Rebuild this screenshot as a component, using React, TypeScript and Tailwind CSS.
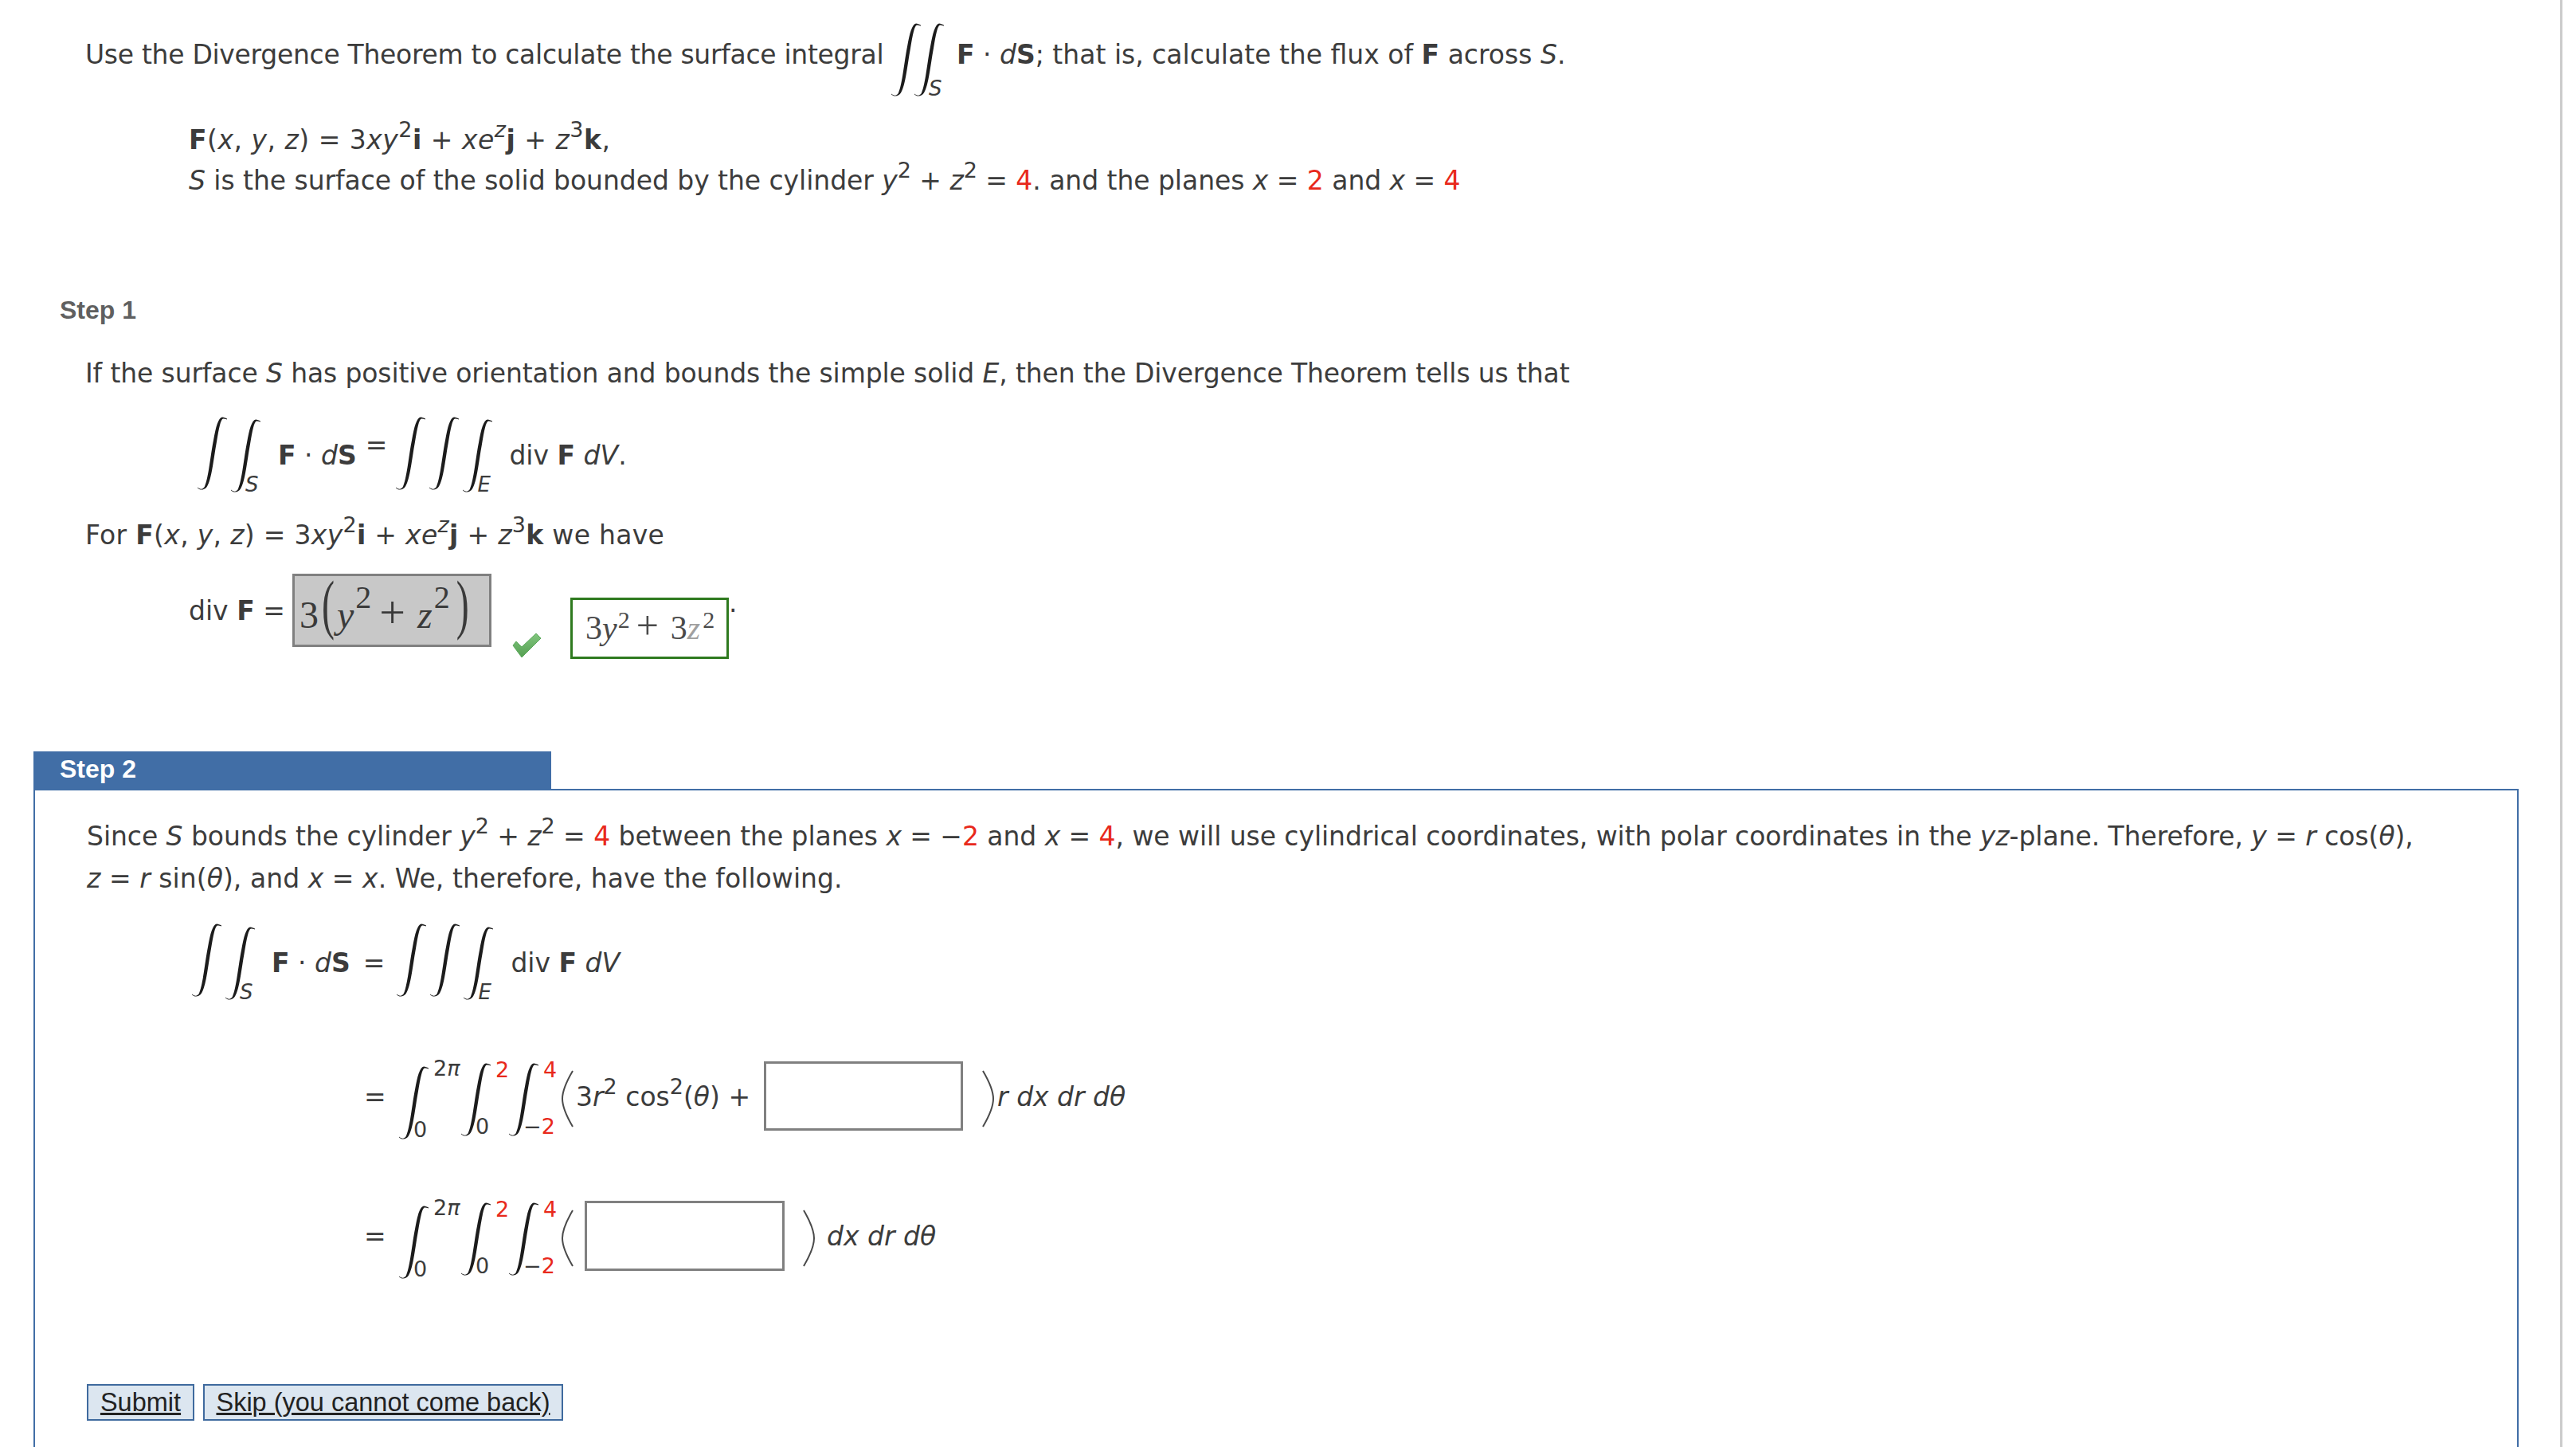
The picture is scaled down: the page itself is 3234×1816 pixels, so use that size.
import type { ReactNode } from "react";

function I({ children }: { children: ReactNode }) {
  return <span className="italic">{children}</span>;
}
function B({ children }: { children: ReactNode }) {
  return <span className="font-bold">{children}</span>;
}
function R({ children }: { children: ReactNode }) {
  return <span className="text-[#e8291c]">{children}</span>;
}
function Sup({ children }: { children: ReactNode }) {
  return <span className="text-[27px] leading-[0] align-[15px]">{children}</span>;
}

function IntSign() {
  return (
    <svg viewBox="0 0 37 92" className="block w-[37px] h-[93px]">
      <path
        fill="#1c1c1c"
        d="M0 89C3 92 7 92 9 88C14 76 16 50 20 30C23 13 26 2 31 1C33 1 35 2 37 3L37 4C35 3 33 3 32 3C29 4 27 14 24 32C20 54 18 78 12 88C9 93 3 93 0 90Z"
      />
    </svg>
  );
}

// integral sign with optional limits drawn over its corners
function Int({
  sub,
  upper,
  lower,
  upperTop = "top-[-5px]",
  className = "",
}: {
  sub?: string;
  upper?: ReactNode;
  lower?: ReactNode;
  upperTop?: string;
  className?: string;
}) {
  return (
    <div className={`relative shrink-0 w-[37px] h-[93px] ${className}`}>
      <IntSign />
      {sub && <span className="absolute left-[18px] top-[68px] text-[26px] leading-[30px] italic">{sub}</span>}
      {upper && (
        <span className={`absolute left-[43px] ${upperTop} text-[27px] leading-[30px] whitespace-nowrap`}>{upper}</span>
      )}
      {lower && <span className="absolute left-[18px] top-[66px] text-[27px] leading-[30px] whitespace-nowrap">{lower}</span>}
    </div>
  );
}

function Paren({ flip = false, className = "" }: { flip?: boolean; className?: string }) {
  return (
    <svg viewBox="0 0 16 72" className={`block shrink-0 w-[16px] h-[72px] ${flip ? "-scale-x-100" : ""} ${className}`}>
      <path d="M14 1C4 18 1 28 1 36C1 44 4 54 14 71" fill="none" stroke="#4a4a4a" strokeWidth="2" />
    </svg>
  );
}

function IntegralStack() {
  return (
    <div className="flex items-start pt-[1px]">
      <Int upper={<>2<I>π</I></>} lower="0" upperTop="top-[-11px]" className="mt-[4px]" />
      <Int upper={<R>2</R>} lower="0" className="ml-[41px]" />
      <Int upper={<R>4</R>} lower={<>−<R>2</R></>} className="ml-[23px]" />
    </div>
  );
}

function BigParen({ children, className = "" }: { children: ReactNode; className?: string }) {
  return <span className={`inline-block leading-none align-[13px] scale-y-[1.7] ${className}`}>{children}</span>;
}

export default function App() {
  return (
    <div className="flex h-[1816px] w-full overflow-hidden bg-white text-[33px] leading-[44px] text-[#3c3c3c] font-['DejaVu_Sans',sans-serif]">
      <main className="flex-1">
        <section className="pt-[16px] pl-[107px]">
          <div className="flex items-center whitespace-pre">
            <span className="w-[1008px] tracking-[-0.3px]">Use the Divergence Theorem to calculate the surface integral</span>
            <div className="flex ml-[4px] mt-[12px]">
              <Int />
              <Int sub="S" className="-ml-[8px]" />
            </div>
            <span className="ml-[16px]">
              <B>F</B> · <I>d</I><B>S</B>; that is, calculate the flux of <B>F</B> across <I>S</I>.
            </span>
          </div>
          <div className="mt-[29px] pl-[130px] leading-[51px] whitespace-pre">
            <p className="tracking-[0.5px]">
              <B>F</B>(<I>x</I>, <I>y</I>, <I>z</I>) = 3<I>xy</I><Sup>2</Sup><B>i</B> + <I>xe</I><Sup><I>z</I></Sup><B>j</B> + <I>z</I><Sup>3</Sup><B>k</B>,
            </p>
            <p className="tracking-[-0.05px]">
              <I>S</I> is the surface of the solid bounded by the cylinder <I>y</I><Sup>2</Sup> + <I>z</I><Sup>2</Sup> = <R>4</R>. and the planes <I>x</I> = <R>2</R> and <I>x</I> = <R>4</R>
            </p>
          </div>
        </section>

        <h2 className="mt-[119px] pl-[75px] text-[32px] leading-[36px] font-bold text-[#606060] font-['Liberation_Sans',sans-serif]">
          Step 1
        </h2>

        <section className="pl-[107px]">
          <p className="mt-[40px] tracking-[-0.13px]">
            If the surface <I>S</I> has positive orientation and bounds the simple solid <I>E</I>, then the Divergence Theorem tells us that
          </p>
          <div className="mt-[31px] h-[96px] flex items-center pl-[141px] whitespace-pre">
            <Int className="-mt-[4px]" />
            <Int sub="S" className="ml-[5px] mt-[3px]" />
            <span className="ml-[22px] mt-[4px]"><B>F</B> · <I>d</I><B>S</B></span>
            <span className="ml-[11px] -mt-[22px]">=</span>
            <Int className="ml-[11px] -mt-[4px]" />
            <Int className="ml-[5px] -mt-[4px]" />
            <Int sub="E" className="ml-[5px] mt-[3px]" />
            <span className="ml-[21px] mt-[4px]">div <B>F</B> <I>dV</I>.</span>
          </div>
          <p className="mt-[32px] whitespace-pre tracking-[0.3px]">
            For <B>F</B>(<I>x</I>, <I>y</I>, <I>z</I>) = 3<I>xy</I><Sup>2</Sup><B>i</B> + <I>xe</I><Sup><I>z</I></Sup><B>j</B> + <I>z</I><Sup>3</Sup><B>k</B> we have
          </p>
          <div className="mt-[26px] flex items-start pl-[130px] whitespace-pre">
            <span className="mt-[25px] w-[130px]">div <B>F</B> =</span>
            <div className="w-[250px] h-[92px] pl-[6px] border-[3px] border-[#808080] bg-[#c8c8c8] text-[48px] leading-[97px] text-[#3a3a3a] font-['Liberation_Serif',serif]">
              3<BigParen className="ml-[4px]">(</BigParen>
              <span className="ml-[3px] italic">y</span>
              <span className="ml-[2px] text-[40px] leading-[0] align-[25px]">2</span>
              <span className="ml-[10px] text-[58px] leading-[0]">+</span>
              <span className="ml-[15px] italic">z</span>
              <span className="ml-[2px] text-[40px] leading-[0] align-[25px]">2</span>
              <BigParen className="ml-[8px]">)</BigParen>
            </div>
            <svg viewBox="0 0 37 31" className="ml-[25px] mt-[74px] w-[37px] h-[31px] shrink-0">
              <defs>
                <linearGradient id="tick" x1="0" y1="0" x2="0" y2="1">
                  <stop offset="0" stopColor="#82c67f" />
                  <stop offset="1" stopColor="#559f52" />
                </linearGradient>
              </defs>
              <path d="M2 16L6 11L13 18L31 1L37 7L13 31Z" fill="url(#tick)" stroke="#5aa85a" strokeWidth="1" />
            </svg>
            <div className="ml-[37px] mt-[30px] w-[199px] h-[77px] pl-[16px] border-[3px] border-[#2f7a1f] text-[42px] leading-[71px] text-[#4a4a4a] font-['Liberation_Serif',serif]">
              3<span className="italic">y</span>
              <span className="ml-[1px] text-[30px] leading-[0] align-[14px]">2</span>
              <span className="ml-[8px] text-[50px] leading-[0]">+</span>
              <span className="ml-[15px]">3</span>
              <span className="italic text-[#a0a0a0]">z</span>
              <span className="ml-[3px] text-[30px] leading-[0] align-[14px]">2</span>
            </div>
            <span className="mt-[15px]">.</span>
          </div>
        </section>

        <section className="mt-[116px] ml-[42px]">
          <div className="relative z-10 w-[650px] h-[49px] bg-[#416ea6] pl-[33px] pt-[4px] text-[32px] leading-[36px] font-bold text-white font-['Liberation_Sans',sans-serif]">
            Step 2
          </div>
          <div className="w-[3120px] h-[900px] -mt-[2px] border-2 border-[#416ea6] pl-[65px] pt-[31px]">
            <p className="leading-[53px] whitespace-pre">
              <span className="tracking-[-0.06px]">
                Since <I>S</I> bounds the cylinder <I>y</I><Sup>2</Sup> + <I>z</I><Sup>2</Sup> = <R>4</R> between the planes <I>x</I> = −<R>2</R> and <I>x</I> = <R>4</R>, we will use cylindrical coordinates, with polar coordinates in the <I>yz</I>-plane. Therefore, <I>y</I> = <I>r</I> cos(<I>θ</I>),
              </span>
              {"\n"}
              <span className="tracking-[0.05px]">
                <I>z</I> = <I>r</I> sin(<I>θ</I>), and <I>x</I> = <I>x</I>. We, therefore, have the following.
              </span>
            </p>
            <div className="mt-[29px] h-[97px] -ml-[67px] pl-[199px] flex items-center whitespace-pre">
              <Int className="-mt-[4px]" />
              <Int sub="S" className="ml-[5px] mt-[3px]" />
              <span className="ml-[21px] mt-[4px]"><B>F</B> · <I>d</I><B>S</B></span>
              <span className="ml-[16px] mt-[4px]">=</span>
              <Int className="ml-[15px] -mt-[4px]" />
              <Int className="ml-[5px] -mt-[4px]" />
              <Int sub="E" className="ml-[5px] mt-[3px]" />
              <span className="ml-[22px] mt-[4px]">div <B>F</B> <I>dV</I></span>
            </div>

            <div className="mt-[77px] h-[98px] -ml-[67px] pl-[415px] flex items-start whitespace-pre">
              <span className="mt-[23px] w-[28px]">=</span>
              <div className="ml-[16px] w-[176px]"><IntegralStack /></div>
              <Paren className="ml-[28px] mt-[11px]" />
              <span className="ml-[2px] mt-[23px]">3<I>r</I><Sup>2</Sup> cos<Sup>2</Sup>(<I>θ</I>) +</span>
              <div className="ml-[17px] w-[250px] h-[87px] border-[3px] border-[#808080]" />
              <Paren flip className="ml-[23px] mt-[11px]" />
              <span className="ml-[4px] mt-[23px]"><I>r dx dr dθ</I></span>
            </div>

            <div className="mt-[77px] h-[98px] -ml-[67px] pl-[415px] flex items-start whitespace-pre">
              <span className="mt-[23px] w-[28px]">=</span>
              <div className="ml-[16px] w-[176px]"><IntegralStack /></div>
              <Paren className="ml-[28px] mt-[11px]" />
              <div className="ml-[13px] w-[251px] h-[88px] border-[3px] border-[#808080]" />
              <Paren flip className="ml-[22px] mt-[11px]" />
              <span className="ml-[15px] mt-[23px]"><I>dx dr dθ</I></span>
            </div>

            <div className="mt-[132px] flex gap-[11px] text-[32.5px] leading-[38px] text-[#222] font-['Liberation_Sans',sans-serif]">
              <button className="w-[135px] h-[46px] border-2 border-[#3f6a9e] bg-[#dce6f0] underline">Submit</button>
              <button className="w-[452px] h-[46px] border-2 border-[#3f6a9e] bg-[#dce6f0] underline">Skip (you cannot come back)</button>
            </div>
          </div>
        </section>
      </main>
      <aside className="w-[20px] border-l-[3px] border-[#cccccc]" />
    </div>
  );
}
